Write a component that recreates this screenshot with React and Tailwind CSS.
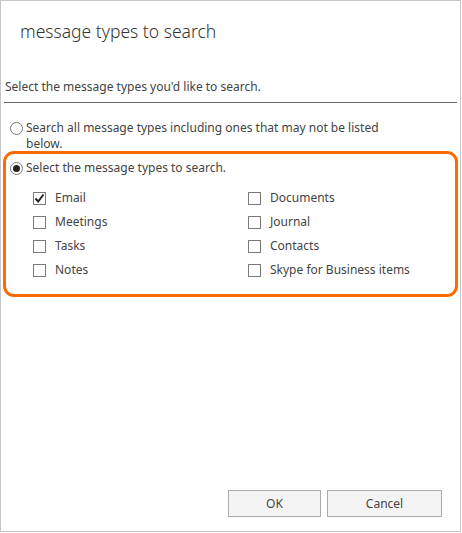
import React from 'react';

const font = { fontFamily: '"Noto Sans", "Open Sans", sans-serif' };

function Box({ checked }) {
  return (
    <span className="w-[13px] h-[13px] border border-[#7a7a7a] bg-white flex items-center justify-center shrink-0">
      {checked && (
        <svg width="11" height="11" viewBox="0 0 11 11">
          <path d="M1.5 5.5 L4.2 8.5 L9.5 1.5" fill="none" stroke="#222" strokeWidth="2" />
        </svg>
      )}
    </span>
  );
}

function Radio({ on }) {
  return (
    <span className="w-[13px] h-[13px] rounded-full border border-[#7a7a7a] bg-white flex items-center justify-center shrink-0">
      {on && <span className="w-[7px] h-[7px] rounded-full bg-[#222]" />}
    </span>
  );
}

function Check({ label, checked }) {
  return (
    <div className="flex items-center gap-[9px] h-[24px]">
      <Box checked={checked} />
      <span>{label}</span>
    </div>
  );
}

export default function App() {
  const left = [['Email', true], ['Meetings'], ['Tasks'], ['Notes']];
  const right = [['Documents'], ['Journal'], ['Contacts'], ['Skype for Business items']];

  return (
    <div className="w-[461px] h-[532px] border border-[#c6c6c6] bg-white flex flex-col text-[12px] text-[#444]" style={font}>
      <h1 className="text-[17.5px] font-light text-[#333] pl-[19px] pt-[17px] leading-[26px]">message types to search</h1>

      <div className="mt-[34px] mx-[3px] border-b border-[#666] pb-[7px] pl-[1px] leading-[17px]">
        Select the message types you'd like to search.
      </div>

      <div className="flex items-start gap-[3px] pl-[9px] mt-[17px] pr-[60px] leading-[16px]">
        <span className="mt-[2px]"><Radio /></span>
        <span>Search all message types including ones that may not be listed below.</span>
      </div>

      <div className="-mt-[1px] mx-[2px] w-[455px] h-[146px] border-[3px] border-[#ff6a00] rounded-[11px] pt-[6px] pl-[4px]">
        <div className="flex items-center gap-[3px] leading-[16px]">
          <Radio on />
          <span>Select the message types to search.</span>
        </div>
        <div className="grid grid-cols-2 mt-[10px] pl-[23px]">
          <div>
            {left.map(([l, c]) => <Check key={l} label={l} checked={c} />)}
          </div>
          <div className="pl-[4px]">
            {right.map(([l]) => <Check key={l} label={l} />)}
          </div>
        </div>
      </div>

      <div className="mt-auto mb-[14px] flex justify-end gap-[6px] pr-[18px]">
        <button className="w-[93px] h-[27px] border border-[#ababab] bg-[#f4f4f4] text-[#444]">OK</button>
        <button className="w-[115px] h-[27px] border border-[#ababab] bg-[#f4f4f4] text-[#444]">Cancel</button>
      </div>
    </div>
  );
}
